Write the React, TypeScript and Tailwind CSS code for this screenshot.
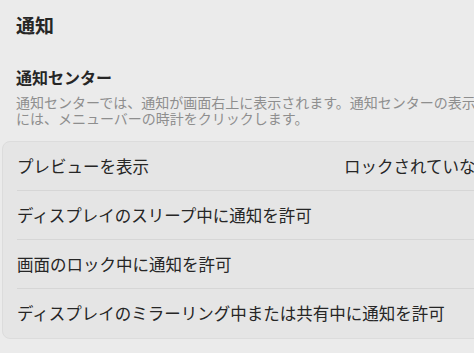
const rows = [
  { label: 'プレビューを表示', value: 'ロックされていないとき' },
  { label: 'ディスプレイのスリープ中に通知を許可' },
  { label: '画面のロック中に通知を許可' },
  { label: 'ディスプレイのミラーリング中または共有中に通知を許可' },
];

export default function App() {
  return (
    <div
      className="w-[474px] h-[353px] overflow-hidden bg-[#ebebeb] text-[#262626]"
      style={{ fontFamily: '"Noto Sans CJK JP", "Noto Sans", sans-serif' }}
    >
      <div className="pl-4 pt-[13px]">
        <h1 className="text-[19px] leading-6 font-semibold">通知</h1>
      </div>

      <div className="pl-4 mt-[30px]">
        <h2 className="text-[16px] leading-5 font-bold">通知センター</h2>
        <p className="mt-[7px] text-[14px] leading-4 text-[#8e8e8e] whitespace-nowrap">
          通知センターでは、通知が画面右上に表示されます。通知センターの表示/非表示を切り替える
          <br />
          には、メニューバーの時計をクリックします。
        </p>
      </div>

      <div className="ml-[2px] mt-[15px] w-[540px] rounded-lg border border-[#dcdcdc] bg-[#e5e5e5]">
        {rows.map((row, i) => (
          <div key={i} className="pl-[14px]">
            <div
              className={`flex items-center h-[49px] text-[16.5px] whitespace-nowrap ${
                i < rows.length - 1 ? 'border-b border-[#d6d6d6]' : ''
              }`}
            >
              <span>{row.label}</span>
              {row.value && <span className="ml-auto pr-4">{row.value}</span>}
            </div>
          </div>
        ))}
      </div>
    </div>
  );
}
